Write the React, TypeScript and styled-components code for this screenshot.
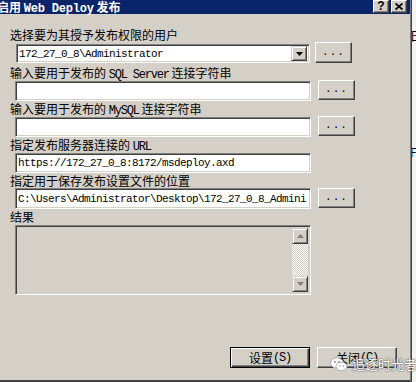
import styled, { createGlobalStyle } from "styled-components";

const GlobalStyle = createGlobalStyle`
  html, body {
    margin: 0;
    padding: 0;
    background: #d4d0c8;
    overflow: hidden;
  }
`;

const FACE = "#d4d0c8";
const CJK = `"Noto Sans CJK SC", "DejaVu Sans", sans-serif`;
const MONO = `"Liberation Mono", "DejaVu Sans Mono", monospace`;

const Screen = styled.div`
  position: relative;
  width: 416px;
  height: 382px;
  display: flex;
  flex-direction: row;
  overflow: hidden;
  font-family: ${CJK};
  font-size: 12px;
  color: #000;
`;

const Window = styled.div`
  width: 410px;
  height: 380px;
  display: flex;
  flex-direction: column;
  background: ${FACE};
  border-right: 1px solid #808080;
  box-shadow: 1px 0 0 #404040;
  border-bottom: 2px solid #404040;
  margin-right: 1px;
`;

const Backdrop = styled.div`
  flex: 1;
  background: #f4f4f4;
  display: flex;
  flex-direction: column;
  overflow: hidden;
  font-size: 12px;
  line-height: 12px;
  color: #000;
`;

const Mark = styled.span<{ $top: number }>`
  display: block;
  margin-top: ${(p) => p.$top}px;
  margin-left: -2px;
`;

const TitleBar = styled.div`
  height: 14px;
  background: #0a246a;
  display: flex;
  align-items: flex-start;
  justify-content: space-between;
  padding-right: 3px;
`;

const Title = styled.div`
  color: #fff;
  font-weight: bold;
  font-size: 12px;
  line-height: 14px;
  margin-left: -3px;
  white-space: pre;
`;

const Latin = styled.span<{ $bold?: boolean }>`
  font-family: ${MONO};
  font-size: 12px;
  letter-spacing: ${(p) => (p.$bold ? -0.2 : -1.2)}px;
  font-weight: ${(p) => (p.$bold ? "bold" : "normal")};
`;

const CaptionButtons = styled.div`
  display: flex;
  gap: 2px;
`;

const CaptionButton = styled.div`
  width: 16px;
  height: 13px;
  box-sizing: border-box;
  background: ${FACE};
  border-top: 1px solid #fff;
  border-left: 1px solid #fff;
  border-right: 1px solid #404040;
  border-bottom: 1px solid #404040;
  box-shadow: inset -1px -1px #808080;
  display: flex;
  align-items: center;
  justify-content: center;
  font-family: "Liberation Sans", sans-serif;
  font-weight: bold;
  font-size: 12px;
  line-height: 11px;
`;

const Body = styled.div`
  flex: 1;
  display: flex;
  flex-direction: column;
  padding: 13px 0 12px 10px;
`;

const Field = styled.div<{ $gap?: number }>`
  display: flex;
  flex-direction: column;
  margin-top: ${(p) => p.$gap ?? 0}px;
`;

const Label = styled.div`
  height: 15px;
  line-height: 15px;
  white-space: pre;
`;

const Row = styled.div`
  height: 21px;
  display: flex;
  padding-left: 5px;
`;

const Sunken = styled.div<{ $w: number; $h: number; $bg?: string }>`
  box-sizing: border-box;
  width: ${(p) => p.$w}px;
  height: ${(p) => p.$h}px;
  background: ${(p) => p.$bg ?? "#fff"};
  border: 1px solid;
  border-color: #808080 #fff #fff #808080;
  box-shadow: inset 1px 1px #404040, inset -1px -1px ${FACE};
`;

const TextBox = styled(Sunken)`
  align-self: flex-end;
  display: flex;
  align-items: center;
  padding-left: 2px;
  font-family: ${MONO};
  font-size: 11px;
  letter-spacing: -0.6px;
  white-space: pre;
  overflow: hidden;
`;

const Combo = styled(TextBox)`
  margin-left: 1px;
  justify-content: space-between;
  padding-right: 2px;
`;

const DropButton = styled.div`
  width: 16px;
  height: 15px;
  box-sizing: border-box;
  background: ${FACE};
  border: 1px solid;
  border-color: ${FACE} #404040 #404040 ${FACE};
  box-shadow: inset 1px 1px #fff, inset -1px -1px #808080;
  display: flex;
  align-items: center;
  justify-content: center;
`;

const Raised = styled.div<{ $w: number; $h: number }>`
  box-sizing: border-box;
  width: ${(p) => p.$w}px;
  height: ${(p) => p.$h}px;
  background: ${FACE};
  border: 1px solid;
  border-color: #fff #404040 #404040 #fff;
  box-shadow: inset -1px -1px #808080;
  display: flex;
  align-items: center;
  justify-content: center;
`;

const BrowseButton = styled(Raised)<{ $shift?: number }>`
  margin-left: ${(p) => p.$shift ?? 7}px;
  align-self: flex-start;
  font-family: ${MONO};
  font-size: 11px;
  letter-spacing: 1px;
  padding-bottom: 2px;
`;

const Results = styled(Sunken)`
  margin: 1px 0 0 5px;
  display: flex;
  justify-content: flex-end;
  padding: 2px;
`;

const ScrollBar = styled.div`
  width: 16px;
  display: flex;
  flex-direction: column;
  justify-content: space-between;
  background-color: ${FACE};
  background-image: repeating-conic-gradient(#fff 0 25%, ${FACE} 0 50%);
  background-size: 2px 2px;
`;

const ScrollButton = styled(Raised)`
  border-color: ${FACE} #404040 #404040 ${FACE};
  box-shadow: inset 1px 1px #fff, inset -1px -1px #808080;
`;

const Footer = styled.div`
  margin-top: auto;
  display: flex;
  justify-content: flex-end;
  gap: 7px;
  padding-right: 13px;
`;

const PushButton = styled(Raised)<{ $default?: boolean }>`
  font-size: 12px;
  border-color: ${(p) => (p.$default ? "#000" : "#fff #404040 #404040 #fff")};
  box-shadow: ${(p) =>
    p.$default
      ? "inset 1px 1px #fff, inset -1px -1px #404040, inset -2px -2px #808080"
      : "inset -1px -1px #808080"};
  white-space: pre;
`;

const Watermark = styled.div`
  position: absolute;
  left: 330px;
  top: 356px;
  display: flex;
  align-items: center;
  gap: 4px;
  color: #fff;
  font-size: 13px;
  line-height: 16px;
  white-space: nowrap;
  text-shadow: 0 0 2px #555, 0 0 1px #333;
`;

function Arrow({ up, color }: { up?: boolean; color: string }) {
  return (
    <svg width="7" height="4" viewBox="0 0 7 4">
      <path d={up ? "M3.5 0 L7 4 L0 4 Z" : "M0 0 L7 0 L3.5 4 Z"} fill={color} />
    </svg>
  );
}

function CloseGlyph() {
  return (
    <svg width="8" height="7" viewBox="0 0 8 7">
      <path d="M0.5 0.5 L7.5 6.5 M7.5 0.5 L0.5 6.5" stroke="#000" strokeWidth="1.8" />
    </svg>
  );
}

function WeChatIcon() {
  return (
    <svg width="18" height="15" viewBox="0 0 18 15">
      <ellipse cx="7" cy="6" rx="6.5" ry="5.2" fill="#fff" stroke="#999" strokeWidth="0.8" />
      <ellipse cx="11.5" cy="9.5" rx="5.5" ry="4.3" fill="#fff" stroke="#999" strokeWidth="0.8" />
      <circle cx="5" cy="5" r="0.9" fill="#888" />
      <circle cx="9" cy="5" r="0.9" fill="#888" />
      <circle cx="10" cy="9" r="0.7" fill="#888" />
      <circle cx="13.5" cy="9" r="0.7" fill="#888" />
    </svg>
  );
}

export default function App() {
  return (
    <>
      <GlobalStyle />
      <Screen>
        <Window>
          <TitleBar>
            <Title>
              启用 <Latin $bold>Web Deploy</Latin> 发布
            </Title>
            <CaptionButtons>
              <CaptionButton>?</CaptionButton>
              <CaptionButton>
                <CloseGlyph />
              </CaptionButton>
            </CaptionButtons>
          </TitleBar>
          <Body>
            <Field>
              <Label>选择要为其授予发布权限的用户</Label>
              <Row>
                <Combo $w={294} $h={19}>
                  <span>172_27_0_8\Administrator</span>
                  <DropButton>
                    <Arrow color="#000" />
                  </DropButton>
                </Combo>
                <BrowseButton $w={37} $h={21} $shift={5}>...</BrowseButton>
              </Row>
            </Field>
            <Field $gap={2}>
              <Label>
                输入要用于发布的 <Latin>SQL Server</Latin> 连接字符串
              </Label>
              <Row>
                <TextBox $w={296} $h={20} />
                <BrowseButton $w={37} $h={20}>...</BrowseButton>
              </Row>
            </Field>
            <Field>
              <Label>
                输入要用于发布的 <Latin>MySQL</Latin> 连接字符串
              </Label>
              <Row>
                <TextBox $w={296} $h={20} />
                <BrowseButton $w={37} $h={20}>...</BrowseButton>
              </Row>
            </Field>
            <Field>
              <Label>
                指定发布服务器连接的 <Latin>URL</Latin>
              </Label>
              <Row>
                <TextBox $w={296} $h={20}>https://172_27_0_8:8172/msdeploy.axd</TextBox>
              </Row>
            </Field>
            <Field>
              <Label>指定用于保存发布设置文件的位置</Label>
              <Row>
                <TextBox $w={296} $h={21}>
                  C:\Users\Administrator\Desktop\172_27_0_8_Admini
                </TextBox>
                <BrowseButton $w={37} $h={20}>...</BrowseButton>
              </Row>
            </Field>
            <Field>
              <Label>结果</Label>
              <Results $w={296} $h={70} $bg={FACE}>
                <ScrollBar>
                  <ScrollButton $w={16} $h={16}>
                    <Arrow up color="#808080" />
                  </ScrollButton>
                  <ScrollButton $w={16} $h={16}>
                    <Arrow color="#808080" />
                  </ScrollButton>
                </ScrollBar>
              </Results>
            </Field>
            <Footer>
              <PushButton $w={80} $h={21} $default>
                设置<Latin>(S)</Latin>
              </PushButton>
              <PushButton $w={80} $h={21}>
                关闭<Latin>(C)</Latin>
              </PushButton>
            </Footer>
          </Body>
        </Window>
        <Backdrop>
          <Mark $top={30}>日</Mark>
          <Mark $top={104}>F</Mark>
        </Backdrop>
        <Watermark>
          <WeChatIcon />
          <span>追逐时光者</span>
        </Watermark>
      </Screen>
    </>
  );
}
